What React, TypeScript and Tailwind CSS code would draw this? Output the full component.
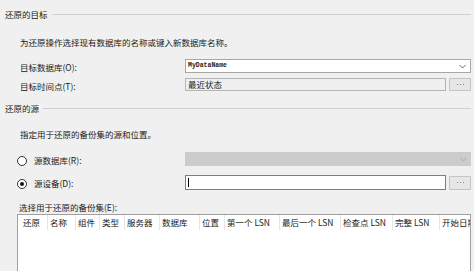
import React from "react";

const Chevron = ({ color }: { color: string }) => (
  <svg width="7" height="5" viewBox="0 0 7 5" className="shrink-0">
    <path d="M0.5 1 L3.5 4 L6.5 1" fill="none" stroke={color} strokeWidth="1" />
  </svg>
);

const Dots = () => (
  <div className="flex h-full w-[22px] shrink-0 items-center justify-center gap-[2px] border border-[#c4c4c4] bg-[#e6e6e6]">
    <span className="h-[1px] w-[1px] bg-[#8a8a8a]" />
    <span className="h-[1px] w-[1px] bg-[#8a8a8a]" />
    <span className="h-[1px] w-[1px] bg-[#8a8a8a]" />
  </div>
);

const SectionTitle = ({ text }: { text: string }) => (
  <div className="flex h-[16px] items-center pl-[5px] pr-[3px]">
    <span className="leading-none">{text}</span>
    <div className="ml-[4px] h-[1px] flex-1 bg-[#cfcfcf]" />
  </div>
);

const Radio = ({ checked }: { checked?: boolean }) => (
  <div className="flex h-[10px] w-[10px] shrink-0 items-center justify-center rounded-full border border-[#333] bg-white">
    {checked && <div className="h-[4px] w-[4px] rounded-full bg-[#111]" />}
  </div>
);

const cols = [
  { t: "还原", w: 27 },
  { t: "名称", w: 28 },
  { t: "组件", w: 24 },
  { t: "类型", w: 25 },
  { t: "服务器", w: 35 },
  { t: "数据库", w: 40 },
  { t: "位置", w: 25 },
  { t: "第一个 LSN", w: 55 },
  { t: "最后一个 LSN", w: 61 },
  { t: "检查点 LSN", w: 52 },
  { t: "完整 LSN", w: 47 },
  { t: "开始日期", w: 50 },
];

export default function App() {
  return (
    <div
      className="relative h-[271px] w-[474px] overflow-hidden bg-[#f0f0f0] text-[8.5px] text-[#1a1a1a]"
      style={{ fontFamily: '"Noto Sans CJK SC", "Noto Sans", sans-serif' }}
    >
      <div className="flex flex-col pt-[6px]">
        <SectionTitle text="还原的目标" />

        <div className="mt-[12px] flex h-[16px] items-center pl-[20px] leading-none">
          为还原操作选择现有数据库的名称或键入新数据库名称。
        </div>

        <div className="mt-[9px] flex h-[14px] items-center">
          <div className="w-[185px] pl-[20px] pt-[2px] leading-none">目标数据库(O):</div>
          <div className="flex h-full w-[286px] items-center justify-between border border-[#a8a8a8] bg-white pl-[2px] pr-[4px]">
            <span
              className="text-[6.5px] font-bold leading-none text-[#222]"
              style={{ fontFamily: '"Liberation Mono", monospace' }}
            >
              MyDataName
            </span>
            <Chevron color="#666" />
          </div>
        </div>

        <div className="mt-[5px] flex h-[13px] items-center">
          <div className="w-[185px] pl-[20px] pt-[3px] leading-none">目标时间点(T):</div>
          <div className="flex h-full w-[261px] items-center border border-[#b4b4b4] bg-[#f0f0f0] pl-[2px] leading-none">
            最近状态
          </div>
          <div className="ml-[3px] h-full">
            <Dots />
          </div>
        </div>

        <div className="mt-[9px]">
          <SectionTitle text="还原的源" />
        </div>

        <div className="mt-[10px] flex h-[16px] items-center pl-[20px] leading-none">
          指定用于还原的备份集的源和位置。
        </div>

        <div className="mt-[10px] flex h-[14px] items-center">
          <div className="flex w-[185px] items-center pl-[17px] pt-[3px] leading-none">
            <Radio />
            <span className="ml-[7px]">源数据库(R):</span>
          </div>
          <div className="flex h-full w-[286px] items-center justify-end bg-[#cccccc] pr-[4px]">
            <Chevron color="#a8a8a8" />
          </div>
        </div>

        <div className="mt-[9px] flex h-[15px] items-center">
          <div className="flex w-[185px] items-center pl-[17px] pt-[2px] leading-none">
            <Radio checked />
            <span className="ml-[7px]">源设备(D):</span>
          </div>
          <div className="flex h-full w-[261px] items-center border border-[#3c8fd6] bg-white pl-[2px]">
            <div className="h-[9px] w-[1px] bg-black" />
          </div>
          <div className="ml-[3px] h-[14px]">
            <Dots />
          </div>
        </div>

        <div className="mt-[10px] flex h-[14px] items-center pl-[19px] leading-none">
          选择用于还原的备份集(E):
        </div>

        <div className="ml-[17px] h-[80px] w-[454px] border border-[#a0a0a0] bg-white">
          <div className="flex h-[15px] items-center overflow-hidden whitespace-nowrap pl-[3px]">
            {cols.map((c, i) => (
              <div
                key={i}
                className="flex h-full shrink-0 items-center border-r border-[#e6e6e6] pl-[2px] leading-none"
                style={{ width: c.w }}
              >
                {c.t}
              </div>
            ))}
          </div>
        </div>
      </div>
    </div>
  );
}
